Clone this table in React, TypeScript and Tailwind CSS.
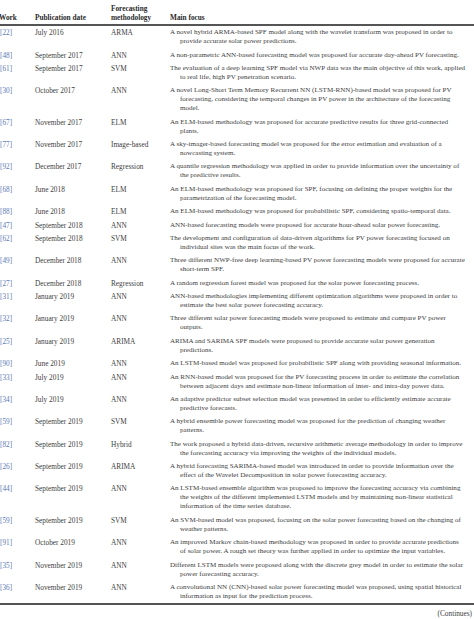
import React from "react";

type Row = { w: string; d: string; m: string; t: string[] };

const rows: Row[] = [
  { w: "[22]", d: "July 2016", m: "ARMA", t: ["A novel hybrid ARMA-based SPF model along with the wavelet transform was proposed in order to", "provide accurate solar power predictions."] },
  { w: "[48]", d: "September 2017", m: "ANN", t: ["A non-parametric ANN-based forecasting model was proposed for accurate day-ahead PV forecasting."] },
  { w: "[61]", d: "September 2017", m: "SVM", t: ["The evaluation of a deep learning SPF model via NWP data was the main objective of this work, applied", "to real life, high PV penetration scenario."] },
  { w: "[30]", d: "October 2017", m: "ANN", t: ["A novel Long-Short Term Memory Recurrent NN (LSTM-RNN)-based model was proposed for PV", "forecasting, considering the temporal changes in PV power in the architecture of the forecasting", "model."] },
  { w: "[67]", d: "November 2017", m: "ELM", t: ["An ELM-based methodology was proposed for accurate predictive results for three grid-connected", "plants."] },
  { w: "[77]", d: "November 2017", m: "Image-based", t: ["A sky-imager-based forecasting model was proposed for the error estimation and evaluation of a", "nowcasting system."] },
  { w: "[92]", d: "December 2017", m: "Regression", t: ["A quantile regression methodology was applied in order to provide information over the uncertainty of", "the predictive results."] },
  { w: "[68]", d: "June 2018", m: "ELM", t: ["An ELM-based methodology was proposed for SPF, focusing on defining the proper weights for the", "parametrization of the forecasting model."] },
  { w: "[88]", d: "June 2018", m: "ELM", t: ["An ELM-based methodology was proposed for probabilistic SPF, considering spatio-temporal data."] },
  { w: "[47]", d: "September 2018", m: "ANN", t: ["ANN-based forecasting models were proposed for accurate hour-ahead solar power forecasting."] },
  { w: "[62]", d: "September 2018", m: "SVM", t: ["The development and configuration of data-driven algorithms for PV power forecasting focused on", "individual sites was the main focus of the work."] },
  { w: "[49]", d: "December 2018", m: "ANN", t: ["Three different NWP-free deep learning-based PV power forecasting models were proposed for accurate", "short-term SPF."] },
  { w: "[27]", d: "December 2018", m: "Regression", t: ["A random regression forest model was proposed for the solar power forecasting process."] },
  { w: "[31]", d: "January 2019", m: "ANN", t: ["ANN-based methodologies implementing different optimization algorithms were proposed in order to", "estimate the best solar power forecasting accuracy."] },
  { w: "[32]", d: "January 2019", m: "ANN", t: ["Three different solar power forecasting models were proposed to estimate and compare PV power", "outputs."] },
  { w: "[25]", d: "January 2019", m: "ARIMA", t: ["ARIMA and SARIMA SPF models were proposed to provide accurate solar power generation", "predictions."] },
  { w: "[90]", d: "June 2019", m: "ANN", t: ["An LSTM-based model was proposed for probabilistic SPF along with providing seasonal information."] },
  { w: "[33]", d: "July 2019", m: "ANN", t: ["An RNN-based model was proposed for the PV forecasting process in order to estimate the correlation", "between adjacent days and estimate non-linear information of inter- and intra-day power data."] },
  { w: "[34]", d: "July 2019", m: "ANN", t: ["An adaptive predictor subset selection model was presented in order to efficiently estimate accurate", "predictive forecasts."] },
  { w: "[59]", d: "September 2019", m: "SVM", t: ["A hybrid ensemble power forecasting model was proposed for the prediction of changing weather", "patterns."] },
  { w: "[82]", d: "September 2019", m: "Hybrid", t: ["The work proposed a hybrid data-driven, recursive arithmetic average methodology in order to improve", "the forecasting accuracy via improving the weights of the individual models."] },
  { w: "[26]", d: "September 2019", m: "ARIMA", t: ["A hybrid forecasting SARIMA-based model was introduced in order to provide information over the", "effect of the Wavelet Decomposition in solar power forecasting accuracy."] },
  { w: "[44]", d: "September 2019", m: "ANN", t: ["An LSTM-based ensemble algorithm was proposed to improve the forecasting accuracy via combining", "the weights of the different implemented LSTM models and by maintaining non-linear statistical", "information of the time series database."] },
  { w: "[59]", d: "September 2019", m: "SVM", t: ["An SVM-based model was proposed, focusing on the solar power forecasting based on the changing of", "weather patterns."] },
  { w: "[91]", d: "October 2019", m: "ANN", t: ["An improved Markov chain-based methodology was proposed in order to provide accurate predictions", "of solar power. A rough set theory was further applied in order to optimize the input variables."] },
  { w: "[35]", d: "November 2019", m: "ANN", t: ["Different LSTM models were proposed along with the discrete grey model in order to estimate the solar", "power forecasting accuracy."] },
  { w: "[36]", d: "November 2019", m: "ANN", t: ["A convolutional NN (CNN)-based solar power forecasting model was proposed, using spatial historical", "information as input for the prediction process."] },
];

export default function App() {
  return (
    <div
      className="w-[474px] h-[619px] overflow-hidden bg-white text-[#404040] text-[7.3px] leading-[9px]"
      style={{ fontFamily: '"Liberation Serif", "Times New Roman", serif' }}
    >
      <div className="grid grid-cols-[35px_76px_59px_1fr] items-end pt-[3.5px] pb-[2.5px] border-b-2 border-[#555] font-semibold text-[#2a2a2a]">
        <div className="-ml-[1px]">Work</div>
        <div>Publication date</div>
        <div>
          <div>Forecasting</div>
          <div>methodology</div>
        </div>
        <div>Main focus</div>
      </div>
      <div className="flex flex-col">
        {rows.map((r, i) => (
          <div key={i} className="grid grid-cols-[35px_76px_59px_1fr] py-[2.2px]">
            <div className="text-[#5b7bb3]">{r.w}</div>
            <div>{r.d}</div>
            <div>{r.m}</div>
            <div className="whitespace-nowrap text-[7.05px]">
              {r.t.map((l, j) => (
                <div key={j} className={j > 0 ? "pl-[10px]" : ""}>
                  {l}
                </div>
              ))}
            </div>
          </div>
        ))}
      </div>
      <div className="border-t-2 border-[#555]" />
      <div className="flex justify-end pr-[2px] pt-[3.5px]">(Continues)</div>
    </div>
  );
}
